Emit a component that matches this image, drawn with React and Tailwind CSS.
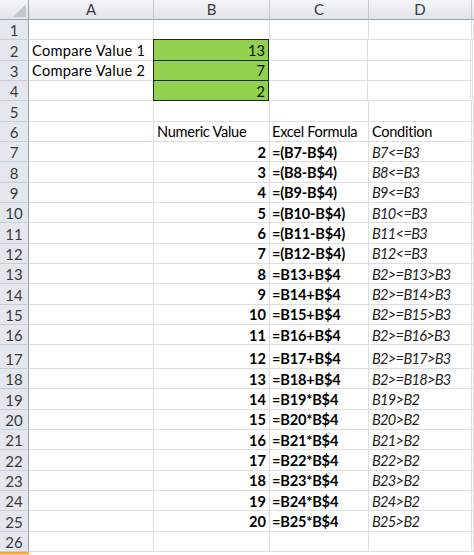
const cols = ['A', 'B', 'C', 'D'];

// baris data 7-25
const dataRows = [];
for (let r = 7; r <= 25; r++) {
  const v = r - 5;
  let formula, cond;
  if (r <= 12) {
    formula = `=(B${r}-B$4)`;
    cond = `B${r}<=B3`;
  } else if (r <= 18) {
    formula = `=B${r}+B$4`;
    cond = `B2>=B${r}>B3`;
  } else {
    formula = `=B${r}*B$4`;
    cond = `B${r}>B2`;
  }
  dataRows.push({ r, v, formula, cond });
}

const rowHeight = (r) => (r === 17 ? 'h-[23.7px]' : 'h-[20.33px]');

const Cell = ({ children, className = '' }) => (
  <div className={`border-r border-b border-[#dcdedf] flex items-end pb-[1px] overflow-hidden whitespace-nowrap ${className}`}>
    {children}
  </div>
);

const RowHead = ({ n, className = '' }) => (
  <div className={`bg-[#e4e8ee] border-r border-b border-[#c9ced6] border-r-[#9ea4ac] flex items-end justify-center pb-[1px] text-[15px] text-[#3a3a3a] ${className}`}>
    {n}
  </div>
);

const Row = ({ r, a, b, c, d, green }) => (
  <div className={`flex ${rowHeight(r)}`}>
    <RowHead n={r} className="w-[29px]" />
    <Cell className="w-[125px] pl-[3px]">{a}</Cell>
    {green ? (
      <div className="w-[116px] bg-[#92d050] border border-[#1f2a14] -mt-px -ml-px flex items-end justify-end pr-[3px] pb-[1px] text-[#111]">
        {b}
      </div>
    ) : (
      <Cell className="w-[116px]">{b}</Cell>
    )}
    <Cell className="w-[99px] pl-[2px]">{c}</Cell>
    <Cell className="w-[103px] pl-[3px]">{d}</Cell>
    <Cell className="w-[2px]" />
  </div>
);

const App = () => {
  return (
    <div className="w-[474px] h-[555px] overflow-hidden bg-white text-[14.6px] leading-none text-black" style={{ fontFamily: 'Lato, "Liberation Sans", sans-serif' }}>
      {/* header kolom */}
      <div className="flex h-[20px]">
        <div className="w-[29px] bg-gradient-to-b from-[#f4f6f9] to-[#dfe4ea] border-r border-b border-[#9ea4ac] relative">
          <svg className="absolute right-[2px] bottom-[2px]" width="13" height="13" viewBox="0 0 13 13">
            <polygon points="13,0 13,13 0,13" fill="#c3c8ce" />
          </svg>
        </div>
        {cols.map((c, i) => (
          <div
            key={c}
            className={`bg-gradient-to-b from-[#f4f6f9] to-[#dfe4ea] border-r border-b border-[#c4cad2] border-b-[#9ea4ac] flex items-center justify-center text-[15px] text-[#3a3a3a] ${['w-[125px]', 'w-[116px]', 'w-[99px]', 'w-[103px]'][i]}`}
          >
            {c}
          </div>
        ))}
        <div className="w-[2px] bg-gradient-to-b from-[#f4f6f9] to-[#dfe4ea] border-b border-[#9ea4ac]" />
      </div>

      <Row r={1} />
      <Row r={2} a={<span className="tracking-[0.3px]">Compare Value 1</span>} b="13" green />
      <Row r={3} a={<span className="tracking-[0.3px]">Compare Value 2</span>} b="7" green />
      <Row r={4} b="2" green />
      <Row r={5} />
      <Row
        r={6}
        b={<span className="pl-[3px] tracking-[-0.3px]">Numeric Value</span>}
        c={<span className="tracking-[-0.3px]">Excel Formula</span>}
        d={<span className="tracking-[-0.3px]">Condition</span>}
      />
      {dataRows.map((row) => (
        <Row
          key={row.r}
          r={row.r}
          b={<span className="ml-auto pr-[3px] font-bold">{row.v}</span>}
          c={<span className="font-bold tracking-[-0.2px]">{row.formula}</span>}
          d={<span className="italic text-[#222] tracking-[-0.7px]">{row.cond}</span>}
        />
      ))}
      <Row r={26} />
      <div className="flex h-[20px]">
        <div className="w-[29px] bg-[#f8d58f] border-t-2 border-[#f2a93b]" />
        <div className="flex-1 bg-white" />
      </div>
    </div>
  );
};

export default App;
